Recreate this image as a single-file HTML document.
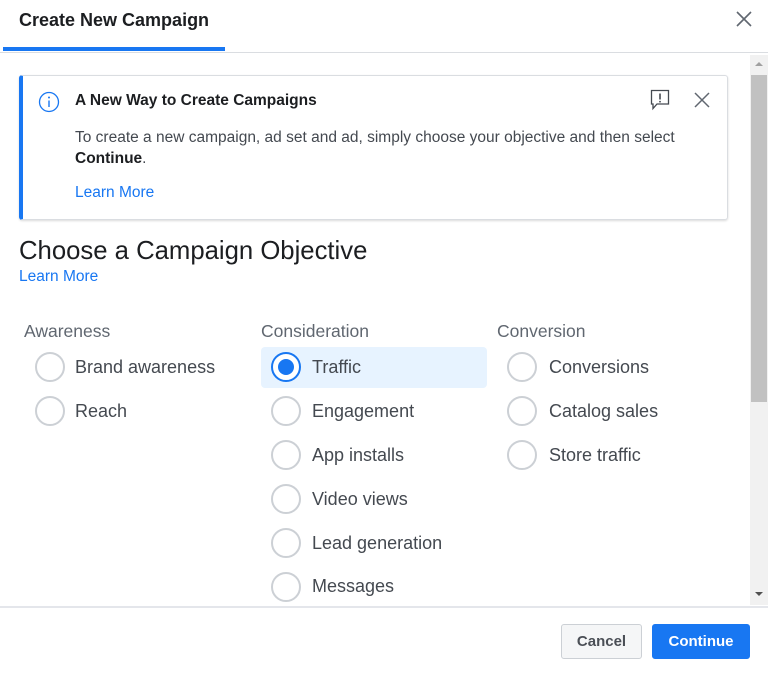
<!DOCTYPE html>
<html><head><style>
*{box-sizing:border-box;margin:0;padding:0}
body{width:768px;height:674px;background:#fff;font-family:"Liberation Sans",Arial,sans-serif;color:#1c1e21;position:relative;overflow:hidden}
.abs{position:absolute}
.title{left:19px;top:10px;font-size:18px;font-weight:bold;color:#1c1e21}
.tabline{left:3px;top:47px;width:222px;height:4px;background:#1877f2}
.hline{left:0;top:52px;width:768px;height:1px;background:#dadde1}
.banner{left:19px;top:75px;width:709px;height:145px;border:1px solid #dadde1;border-left:4px solid #1877f2;border-radius:3px;box-shadow:0 1px 2px rgba(0,0,0,.15)}
.bt{left:75px;top:92px;font-size:15.5px;font-weight:bold}
.bb{left:75px;top:127px;font-size:15.5px;color:#444950;line-height:21px;width:610px}
.link{color:#1877f2;font-size:15.5px}
h2{position:absolute;left:19px;top:237px;font-size:25.7px;font-weight:normal;color:#1c1e21}
.colh{font-size:17.5px;color:#606770;top:321px}
.r{position:absolute;width:30px;height:30px;border:2px solid #ccd0d5;border-radius:50%;background:#fff}
.lab{position:absolute;font-size:18px;color:#444950}
.sb{left:750px;top:55px;width:18px;height:550px;background:#f1f1f1}
.thumb{left:751px;top:75px;width:16px;height:327px;background:#c1c1c1}
.fline{left:0;top:606px;width:768px;height:2px;background:#e4e6eb}
.btn{top:624px;height:35px;border-radius:3px;font-size:15px;font-weight:bold;text-align:center;line-height:33px}
</style></head><body>
<div class="abs title">Create New Campaign</div>
<svg class="abs" style="left:735px;top:10px" width="18" height="18"><path d="M2 2L16 16M16 2L2 16" stroke="#606770" stroke-width="1.6"/></svg>
<div class="abs tabline"></div>
<div class="abs hline"></div>
<div class="abs sb"></div>
<div class="abs thumb"></div>
<svg class="abs" style="left:754px;top:60px" width="10" height="8"><path d="M1 6L5 2L9 6Z" fill="#a0a0a0"/></svg>
<svg class="abs" style="left:754px;top:590px" width="10" height="8"><path d="M1 2L5 6L9 2Z" fill="#505050"/></svg>
<div class="abs banner"></div>
<svg class="abs" style="left:38px;top:91px" width="22" height="22"><circle cx="11" cy="11" r="9.5" fill="none" stroke="#1877f2" stroke-width="1.3"/><circle cx="11" cy="6.5" r="1" fill="#1877f2"/><path d="M11 9.5V16" stroke="#1877f2" stroke-width="1.4"/></svg>
<div class="abs bt">A New Way to Create Campaigns</div>
<svg class="abs" style="left:650px;top:89px" width="20" height="22"><path d="M1.5 1.5H18.5V15H7L3 19.5V15H1.5Z" fill="none" stroke="#444950" stroke-width="1.3"/><path d="M10 4.5V10.5" stroke="#444950" stroke-width="1.6"/><circle cx="10" cy="12.7" r="0.9" fill="#444950"/></svg>
<svg class="abs" style="left:694px;top:92px" width="16" height="16"><path d="M1 1L15 15M15 1L1 15" stroke="#606770" stroke-width="1.5"/></svg>
<div class="abs bb">To create a new campaign, ad set and ad, simply choose your objective and then select <b style="color:#1c1e21">Continue</b>.</div>
<div class="abs link" style="left:75px;top:184px">Learn More</div>
<h2>Choose a Campaign Objective</h2>
<div class="abs link" style="left:19px;top:268px">Learn More</div>
<div class="abs colh" style="left:24px">Awareness</div>
<div class="abs colh" style="left:261px">Consideration</div>
<div class="abs colh" style="left:497px">Conversion</div>
<div class="abs" style="left:261px;top:347px;width:226px;height:41px;background:#e7f3ff;border-radius:4px"></div>
<div class="r" style="left:35px;top:352px"></div><div class="lab" style="left:75px;top:357px">Brand awareness</div>
<div class="r" style="left:35px;top:396px"></div><div class="lab" style="left:75px;top:401px">Reach</div>
<div class="r" style="left:271px;top:352px;border-color:#1877f2"><div style="position:absolute;left:5px;top:5px;width:16px;height:16px;border-radius:50%;background:#1877f2"></div></div><div class="lab" style="left:312px;top:357px">Traffic</div>
<div class="r" style="left:271px;top:396px"></div><div class="lab" style="left:312px;top:401px">Engagement</div>
<div class="r" style="left:271px;top:440px"></div><div class="lab" style="left:312px;top:445px">App installs</div>
<div class="r" style="left:271px;top:484px"></div><div class="lab" style="left:312px;top:489px">Video views</div>
<div class="r" style="left:271px;top:528px"></div><div class="lab" style="left:312px;top:533px">Lead generation</div>
<div class="r" style="left:271px;top:572px"></div><div class="lab" style="left:312px;top:576px">Messages</div>
<div class="r" style="left:507px;top:352px"></div><div class="lab" style="left:549px;top:357px">Conversions</div>
<div class="r" style="left:507px;top:396px"></div><div class="lab" style="left:549px;top:401px">Catalog sales</div>
<div class="r" style="left:507px;top:440px"></div><div class="lab" style="left:549px;top:445px">Store traffic</div>
<div class="abs" style="left:0;top:606px;width:768px;height:68px;background:#fff"></div>
<div class="abs fline"></div>
<div class="abs btn" style="left:561px;width:81px;background:#f5f6f7;border:1px solid #ccd0d5;color:#4b4f56">Cancel</div>
<div class="abs btn" style="left:652px;width:98px;background:#1877f2;color:#fff;border:1px solid #1877f2">Continue</div>
</body></html>
